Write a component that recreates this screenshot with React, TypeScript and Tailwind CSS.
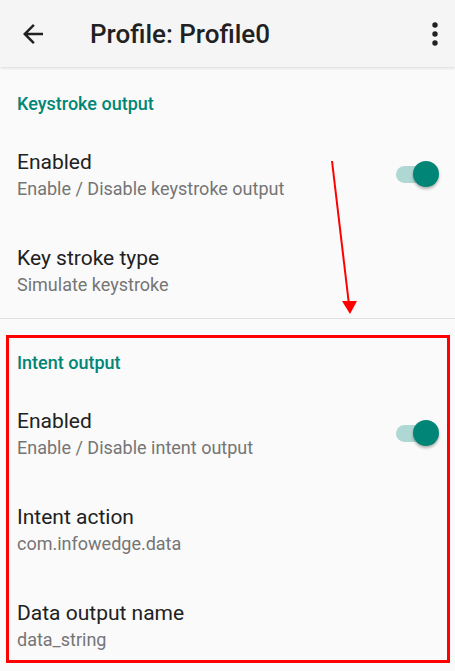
import React from 'react';

type Row = { title: string; summary: string; toggle?: boolean };

const sections: { header: string; rows: Row[] }[] = [
  {
    header: 'Keystroke output',
    rows: [
      { title: 'Enabled', summary: 'Enable / Disable keystroke output', toggle: true },
      { title: 'Key stroke type', summary: 'Simulate keystroke' },
    ],
  },
  {
    header: 'Intent output',
    rows: [
      { title: 'Enabled', summary: 'Enable / Disable intent output', toggle: true },
      { title: 'Intent action', summary: 'com.infowedge.data' },
      { title: 'Data output name', summary: 'data_string' },
    ],
  },
];

const Switch = () => (
  <div className="relative h-[26px] w-[43px] shrink-0">
    <div className="absolute left-0 top-[5px] h-[17px] w-[34px] rounded-full bg-[#afd7d3]" />
    <div className="absolute right-0 top-0 h-[26px] w-[26px] rounded-full bg-[#008577] shadow-[0_2px_3px_rgba(0,0,0,0.3)]" />
  </div>
);

const PrefRow = ({ title, summary, toggle }: Row) => (
  <div className="flex h-[96px] items-center pl-[17px] pr-[16px]">
    <div className="flex-1">
      <div className="text-[21px] leading-[26px] text-[#212121]">{title}</div>
      <div className="mt-[3px] text-[18px] leading-[22px] text-[#757575]">{summary}</div>
    </div>
    {toggle && <Switch />}
  </div>
);

export default function App() {
  return (
    <div
      className="relative h-[671px] w-[455px] overflow-hidden bg-[#fafafa]"
      style={{ fontFamily: 'Roboto, "Noto Sans", sans-serif' }}
    >
      {/* App bar */}
      <header className="relative z-10 flex h-[67px] items-center bg-[#f5f5f5] shadow-[0_1px_3px_rgba(0,0,0,0.14)]">
        <svg viewBox="0 0 24 24" className="ml-[18px] h-[30px] w-[30px] fill-[#212121]">
          <path d="M20 11H7.83l5.59-5.59L12 4l-8 8 8 8 1.41-1.41L7.83 13H20v-2z" />
        </svg>
        <h1 className="ml-[42px] flex-1 text-[26px] font-medium leading-[32px] text-[#212121]">Profile: Profile0</h1>
        <svg viewBox="0 0 24 24" className="mr-[2px] h-[36px] w-[36px] fill-[#212121]">
          <circle cx="12" cy="6" r="1.8" />
          <circle cx="12" cy="12" r="1.8" />
          <circle cx="12" cy="18" r="1.8" />
        </svg>
      </header>

      {sections.map((s, i) => (
        <section key={s.header} className={i > 0 ? 'border-t border-[#e0e0e0]' : ''}>
          <div
            className={`px-[17px] pb-[11px] text-[18px] font-medium leading-[22px] text-[#008577] ${
              i === 0 ? 'pt-[26px]' : 'pt-[33px]'
            }`}
          >
            {s.header}
          </div>
          {s.rows.map((r) => (
            <PrefRow key={r.title + r.summary} {...r} />
          ))}
        </section>
      ))}

      {/* Annotation: highlight box and arrow */}
      <div className="pointer-events-none absolute left-[6px] top-[335px] h-[328px] w-[444px] border-[3px] border-[#ff0000]" />
      <svg className="pointer-events-none absolute left-0 top-0" width="455" height="671">
        <line x1="332" y1="161" x2="348.8" y2="303" stroke="#ff0000" strokeWidth="2" />
        <polygon points="342,301 357,301 350,314" fill="#ff0000" />
      </svg>
    </div>
  );
}
